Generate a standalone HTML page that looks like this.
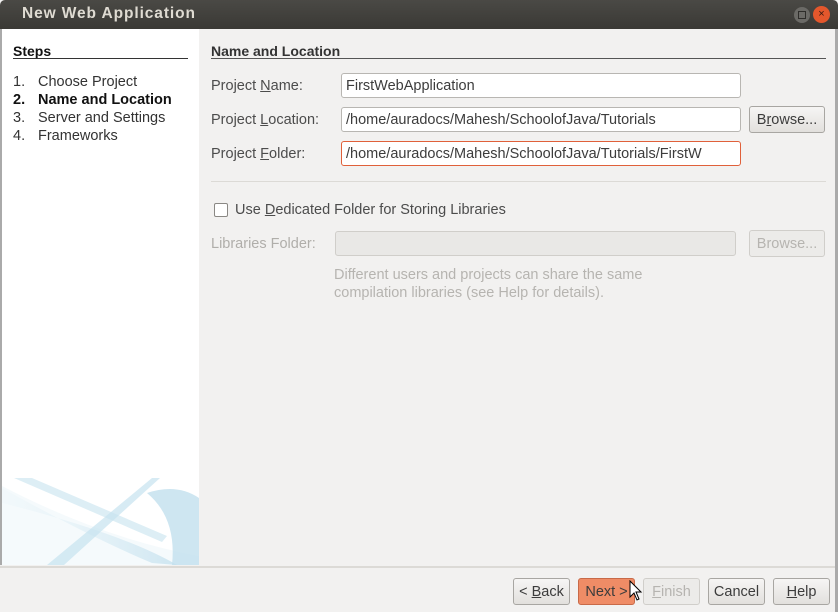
<!DOCTYPE html>
<html><head><meta charset="utf-8"><style>
*{margin:0;padding:0;box-sizing:border-box}
body{width:838px;height:612px;background:#f2f1f0;font-family:"Liberation Sans","DejaVu Sans",sans-serif;font-size:14px;color:#3c3c3c;position:relative;overflow:hidden}
.a{position:absolute;white-space:nowrap}
.title{left:0;top:0;width:838px;height:29px;background:linear-gradient(#4a4945,#3a3935);border-radius:5px 5px 0 0}
.inp{position:absolute;height:25px;background:#fff;border:1px solid #b8b6b2;border-radius:3px;padding:4px 4px 0;font-size:14.5px;color:#3c3c3c;white-space:nowrap;overflow:hidden}
.btn{position:absolute;height:27px;border:1px solid #a8a6a2;border-radius:3px;background:linear-gradient(#f6f5f4,#e2e0dd);text-align:center;line-height:27px;font-size:14.5px;color:#3c3c3c}
.dis{color:#b6b4b0;border-color:#d0ceca;background:#ecebe9}
.lbl{color:#4c4c4c;font-size:14.5px}
</style></head><body>
<div class="a title"></div>
<div class="a" style="left:22px;top:5px;color:#dfdbd2;font-weight:bold;font-size:15.5px;letter-spacing:0.9px">New Web Application</div>
<div class="a" style="left:794px;top:7px;width:16px;height:16px;border-radius:50%;background:#6b6a66"></div>
<div class="a" style="left:798px;top:11px;width:8px;height:8px;border:1px solid #2e2d2a"></div>
<div class="a" style="left:813px;top:6px;width:17px;height:17px;border-radius:50%;background:#e4572c;color:#3a1a10;font-size:11px;text-align:center;line-height:17px">×</div>
<div class="a" style="left:0;top:29px;width:199px;height:536px;background:#fff;border-left:2px solid #aaa"></div>
<svg class="a" style="left:2px;top:478px" width="197" height="87">
<defs><linearGradient id="g" x1="0" x2="1"><stop offset="0" stop-color="#e4f2f8" stop-opacity=".3"/><stop offset="1" stop-color="#b5d9ea"/></linearGradient></defs>
<path d="M0 8 Q100 60 197 78 L197 87 L0 87Z" fill="#eef6fa" opacity=".6"/>
<path d="M0 10 Q90 60 150 85 L175 87 Q120 55 0 25Z" fill="url(#g)" opacity=".6"/>
<path d="M145 15 Q175 5 197 20 L197 87 L170 87 Q175 40 145 15Z" fill="#c2e0ee" opacity=".8"/>
<path d="M12 0 L30 0 L165 58 L160 64Z" fill="#c6e3ef" opacity=".6"/>
<path d="M45 87 L150 0 L158 0 L62 87Z" fill="#c6e3ef" opacity=".7"/>
</svg>
<div class="a" style="left:13px;top:43px;font-weight:bold;color:#111">Steps</div>
<div class="a" style="left:13px;top:58px;width:175px;height:1px;background:#333"></div>
<div class="a" style="left:13px;top:73px;line-height:18px;color:#333;font-size:14.5px">1.<br><b style="color:#111">2.</b><br>3.<br>4.</div>
<div class="a" style="left:38px;top:73px;line-height:18px;color:#333;font-size:14.5px">Choose Project<br><b style="color:#111">Name and Location</b><br>Server and Settings<br>Frameworks</div>
<div class="a" style="left:211px;top:43px;font-weight:bold;color:#333">Name and Location</div>
<div class="a" style="left:211px;top:58px;width:615px;height:1px;background:#555"></div>
<div class="a lbl" style="left:211px;top:78px">Project <u>N</u>ame:</div>
<div class="a lbl" style="left:211px;top:112px">Project <u>L</u>ocation:</div>
<div class="a lbl" style="left:211px;top:146px">Project <u>F</u>older:</div>
<div class="inp" style="left:341px;top:73px;width:400px">FirstWebApplication</div>
<div class="inp" style="left:341px;top:107px;width:400px">/home/auradocs/Mahesh/SchoolofJava/Tutorials</div>
<div class="inp" style="left:341px;top:141px;width:400px;border:1px solid #e0603a">/home/auradocs/Mahesh/SchoolofJava/Tutorials/FirstW</div>
<div class="btn" style="left:749px;top:106px;width:76px">B<u>r</u>owse...</div>
<div class="a" style="left:211px;top:181px;width:615px;height:1px;background:#dcdad6"></div>
<div class="a" style="left:214px;top:203px;width:14px;height:14px;border:1px solid #8a8884;border-radius:2px;background:#fff"></div>
<div class="a lbl" style="left:235px;top:202px">Use <u>D</u>edicated Folder for Storing Libraries</div>
<div class="a lbl" style="left:211px;top:236px;color:#b0aeaa">Libraries Folder:</div>
<div class="inp" style="left:335px;top:231px;width:401px;background:#e9e8e6;border-color:#d0ceca"></div>
<div class="btn dis" style="left:749px;top:230px;width:76px">Browse...</div>
<div class="a" style="left:334px;top:266px;line-height:18px;color:#b6b4b0;font-size:14.5px">Different users and projects can share the same<br>compilation libraries (see Help for details).</div>
<div class="a" style="left:0;top:566px;width:838px;height:2px;background:#dcdad6"></div>
<div class="btn" style="left:513px;top:578px;width:57px">&lt; <u>B</u>ack</div>
<div class="btn" style="left:578px;top:578px;width:57px;background:#ef8c66;border-color:#c86a48">Next &gt;</div>
<div class="btn dis" style="left:643px;top:578px;width:57px"><u>F</u>inish</div>
<div class="btn" style="left:708px;top:578px;width:57px">Cancel</div>
<div class="btn" style="left:773px;top:578px;width:57px"><u>H</u>elp</div>
<svg class="a" style="left:629px;top:580px" width="14" height="22"><path d="M1 1 L1 17 L5 13 L8 20 L10 19 L7 12 L12 12Z" fill="#fff" stroke="#000"/></svg>
<div class="a" style="left:835px;top:29px;width:3px;height:583px;background:#aaa"></div>
</body></html>
